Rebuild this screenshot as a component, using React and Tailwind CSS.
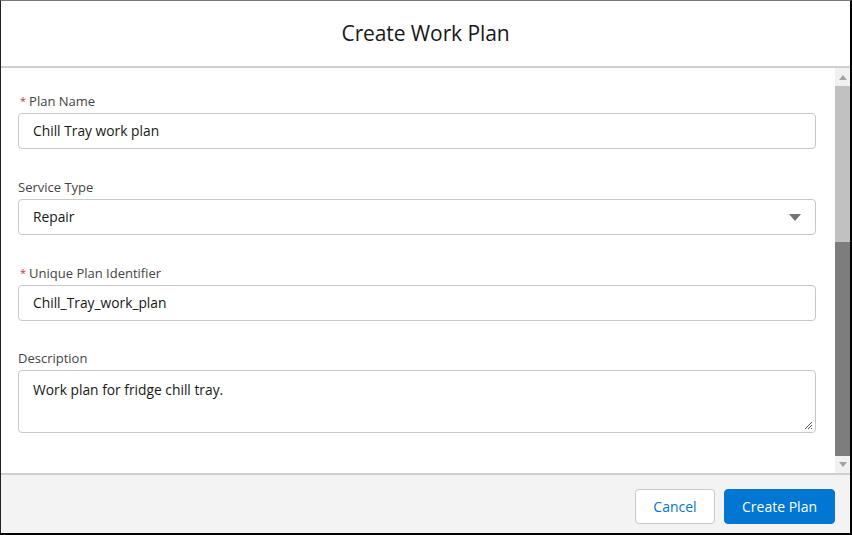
export default function App() {
  const font = { fontFamily: '"Open Sans", "Noto Sans", sans-serif' };
  const Label = ({ children, required }) => (
    <div className="h-[18px] mb-[3px] flex items-center text-[13px] text-[#444444] leading-[18px]">
      {required && <span className="text-[#c23934] ml-[2px] mr-[3px] text-[11px]">*</span>}
      {children}
    </div>
  );
  const inputCls =
    "h-[36px] w-full rounded-[4px] border border-[#c9c9c9] bg-white px-[14px] flex items-center text-[13.8px] text-[#181818]";
  return (
    <div
      className="w-[852px] h-[535px] flex flex-col bg-white border-l border-l-[#222] border-t border-t-[#777] border-r-2 border-r-black border-b-2 border-b-black overflow-hidden"
      style={font}
    >
      {/* Header */}
      <div className="h-[65px] shrink-0 flex items-center justify-center bg-white">
        <h1 className="text-[21px] text-[#181818] font-normal leading-none tracking-[-0.1px]">Create Work Plan</h1>
      </div>
      <div className="h-[2px] shrink-0 bg-[#cfcfcf]" />
      {/* Body */}
      <div className="h-[405px] shrink-0 flex">
        <div className="flex-1 pl-[17px] pr-[19px] pt-[24px]">
          <div className="mb-[29px]">
            <Label required>Plan Name</Label>
            <div className={inputCls}>Chill Tray work plan</div>
          </div>
          <div className="mb-[29px]">
            <Label>Service Type</Label>
            <div className={inputCls + " justify-between"}>
              <span>Repair</span>
              <svg width="12" height="7" viewBox="0 0 12 7">
                <path d="M0 0 L12 0 L6 7 Z" fill="#747474" />
              </svg>
            </div>
          </div>
          <div className="mb-[28px]">
            <Label required>Unique Plan Identifier</Label>
            <div className={inputCls}>Chill_Tray_work_plan</div>
          </div>
          <div>
            <Label>Description</Label>
            <div className="relative h-[63px] w-full rounded-[4px] border border-[#c9c9c9] bg-white px-[14px] pt-[9px] text-[13.8px] text-[#181818]">
              Work plan for fridge chill tray.
              <svg width="10" height="10" viewBox="0 0 10 10" className="absolute right-[2px] bottom-[2px]">
                <path d="M9 2 L2 9 M9 5 L5 9 M9 8 L8 9" stroke="#555" strokeWidth="1" />
              </svg>
            </div>
          </div>
        </div>
        {/* Scrollbar */}
        <div className="w-[15px] shrink-0 flex flex-col bg-[#f1f1f1]">
          <div className="h-[18px] flex items-center justify-center">
            <svg width="8" height="5" viewBox="0 0 8 5">
              <path d="M0 5 L8 5 L4 0 Z" fill="#a3a3a3" />
            </svg>
          </div>
          <div className="h-[156px] bg-[#c1c1c1]" />
          <div className="h-[214px] bg-[#7d7d7d]" />
          <div className="h-[17px] flex items-center justify-center">
            <svg width="8" height="5" viewBox="0 0 8 5">
              <path d="M0 0 L8 0 L4 5 Z" fill="#a3a3a3" />
            </svg>
          </div>
        </div>
      </div>
      <div className="h-[2px] shrink-0 bg-[#cfcfcf]" />
      {/* Footer */}
      <div className="flex-1 bg-[#f3f3f3] flex items-center justify-end gap-[9px] pr-[15px] pt-[5px]">
        <button className="h-[35px] w-[80px] rounded-[4px] border border-[#c9c9c9] bg-white text-[14px] text-[#0176d3]">
          Cancel
        </button>
        <button className="h-[35px] w-[111px] rounded-[4px] border border-[#0176d3] bg-[#0176d3] text-[14px] text-white">
          Create Plan
        </button>
      </div>
    </div>
  );
}
